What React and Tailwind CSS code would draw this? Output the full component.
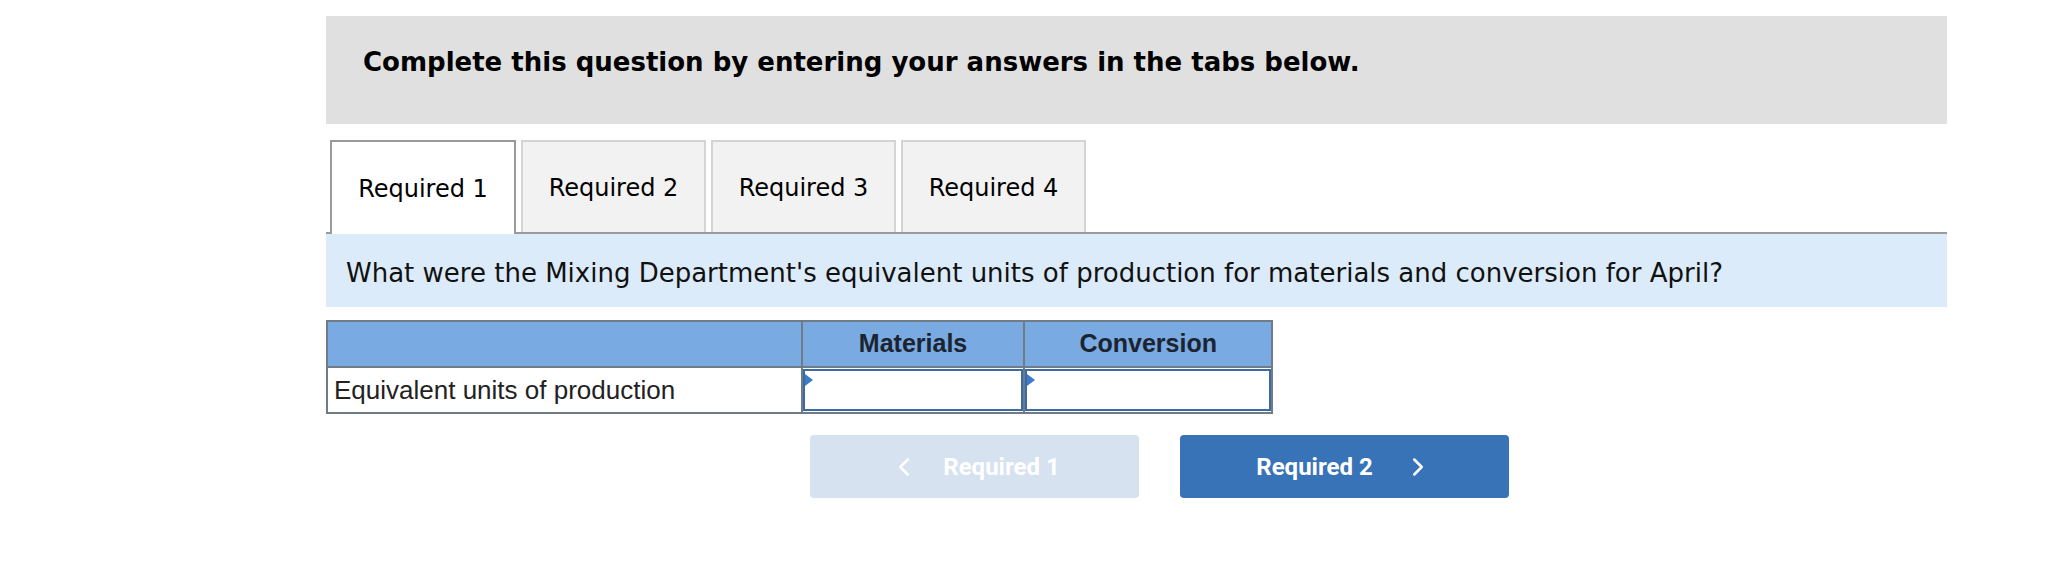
import React from 'react';
import { ChevronLeft, ChevronRight } from 'lucide-react';

const verdana = { fontFamily: '"DejaVu Sans", Verdana, sans-serif' };
const arial = { fontFamily: '"Liberation Sans", Arial, sans-serif' };
const roboto = { fontFamily: 'Roboto, "Liberation Sans", sans-serif' };

const tabs = ['Required 1', 'Required 2', 'Required 3', 'Required 4'];

const Flag = () => (
  <span className="absolute top-[3px] left-0 w-0 h-0 border-y-[6px] border-y-transparent border-l-[8px] border-l-[#3b7bcc]" />
);

const InputCell = () => (
  <td className="p-0 border-2 border-[#717b86]">
    <div className="relative h-[42px] bg-white border-2 border-[#3a6ba5]">
      <Flag />
    </div>
  </td>
);

export default function App() {
  return (
    <div className="w-[2048px] h-[571px] bg-white pt-4 pl-[326px]">
      <div className="w-[1621px]">
        {/* Instruction banner */}
        <div className="h-[108px] bg-[#e0e0e0] pt-[31px] px-[37px]">
          <p className="text-[26px] leading-[30px] font-bold text-black" style={verdana}>
            Complete this question by entering your answers in the tabs below.
          </p>
        </div>

        {/* Tabs */}
        <div className="mt-4 h-[94px] flex items-end gap-[5px] pl-[4px] border-b-2 border-[#9a9a9a]">
          {tabs.map((t, i) =>
            i === 0 ? (
              <div
                key={t}
                className="-mb-[2px] h-[94px] w-[186px] bg-white border-2 border-b-0 border-[#9a9a9a] flex items-center justify-center pt-[2px] text-[24px] text-black"
                style={verdana}
              >
                {t}
              </div>
            ) : (
              <div
                key={t}
                className="h-[92px] w-[185px] bg-[#f2f2f2] border-2 border-b-0 border-[#d4d4d4] flex items-center justify-center pt-[2px] text-[24px] text-black"
                style={verdana}
              >
                {t}
              </div>
            )
          )}
        </div>

        {/* Question */}
        <div className="h-[73px] bg-[#dcebf9] flex items-center pl-5 pt-[6px]">
          <p className="text-[26px] text-[#111]" style={verdana}>
            What were the Mixing Department's equivalent units of production for materials and conversion for April?
          </p>
        </div>

        {/* Answer table */}
        <table className="mt-[13px] w-[947px] border-collapse border-2 border-[#717b86]" style={arial}>
          <thead>
            <tr className="h-[46px] bg-[#79aae1]">
              <th className="w-[476px] border-2 border-[#717b86]" />
              <th className="w-[223px] border-2 border-[#717b86] text-[25px] font-bold text-[#1b2430]">Materials</th>
              <th className="w-[248px] border-2 border-[#717b86] text-[25px] font-bold text-[#1b2430]">Conversion</th>
            </tr>
          </thead>
          <tbody>
            <tr className="h-[46px]">
              <td className="border-2 border-[#717b86] pl-[6px] text-[26px] text-[#222]">Equivalent units of production</td>
              <InputCell />
              <InputCell />
            </tr>
          </tbody>
        </table>

        {/* Navigation */}
        <div className="mt-[21px] ml-[484px] flex gap-[41px]" style={roboto}>
          <button className="w-[329px] h-[63px] rounded-[4px] bg-[#d6e2f0] flex items-center justify-center gap-[24px] text-white text-[24px] font-bold">
            <ChevronLeft size={30} strokeWidth={2} />
            <span>Required 1</span>
          </button>
          <button className="w-[329px] h-[63px] rounded-[4px] bg-[#3873b8] flex items-center justify-center gap-[30px] text-white text-[24px] font-bold">
            <span>Required 2</span>
            <ChevronRight size={30} strokeWidth={2} />
          </button>
        </div>
      </div>
    </div>
  );
}
